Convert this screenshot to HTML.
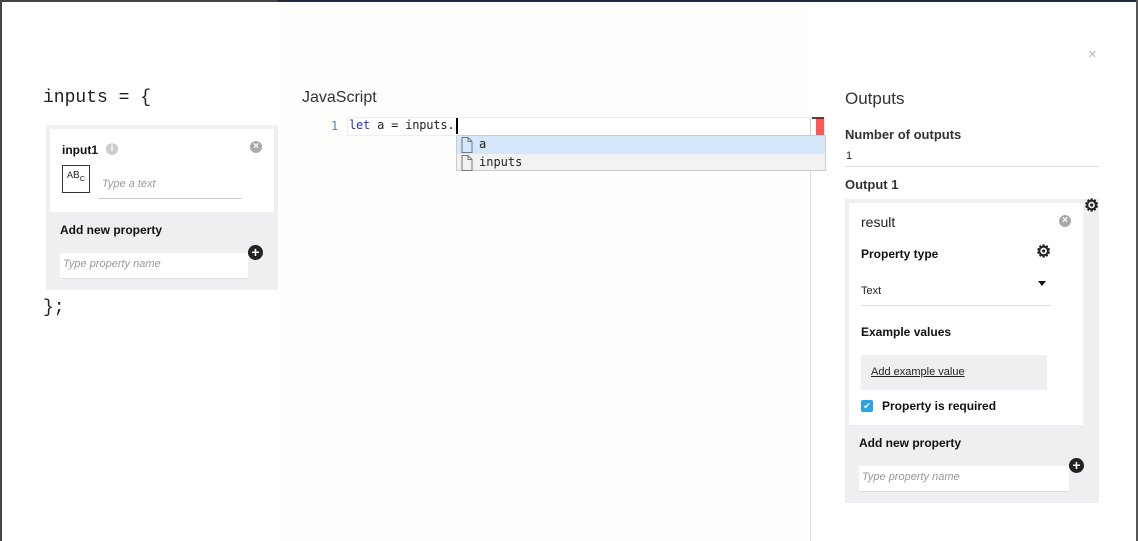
<!DOCTYPE html>
<html><head><style>
*{box-sizing:border-box;margin:0;padding:0}
body{width:1138px;height:541px;background:#fff;position:relative;overflow:hidden;font-family:"Liberation Sans",sans-serif;color:#222}
.a{position:absolute}
.mono{font-family:"Liberation Mono",monospace}
.dj{font-family:"DejaVu Sans Mono",monospace}
.b{font-weight:bold;font-size:12px;color:#111}
.ph{font-style:italic;color:#999;font-size:11px}
.plus{width:15px;height:15px;border-radius:50%;background:#222;color:#fff;font-size:14px;line-height:15px;text-align:center;font-weight:bold}
.x{width:12px;height:12px;border-radius:50%;background:#aaa;color:#fff;font-size:10px;line-height:12px;text-align:center;font-weight:bold}
</style></head><body>
<div class="a" style="left:0;top:0;width:1138px;height:2px;background:#444"></div>
<div class="a" style="left:278px;top:0;width:860px;height:2px;background:#1e2a40"></div>
<div class="a" style="left:0;top:0;width:2px;height:541px;background:#444"></div>
<div class="a" style="left:1136px;top:0;width:2px;height:541px;background:#555"></div>
<div class="a" style="left:280px;top:2px;width:530px;height:539px;background:#fefefd"></div>
<div class="a" style="left:810px;top:118px;width:1px;height:423px;background:#ddd"></div>
<div class="a" style="left:1088px;top:46px;color:#bbb;font-size:15px">×</div>

<div class="a mono" style="left:43px;top:88px;font-size:18px;color:#222">inputs = {</div>
<div class="a" style="left:46px;top:125px;width:232px;height:165px;background:#eeeff1"></div>
<div class="a" style="left:50px;top:129px;width:224px;height:83px;background:#fff"></div>
<div class="a b" style="left:62px;top:143px">input1</div>
<div class="a x" style="left:106px;top:143px;background:#ccc">i</div>
<div class="a x" style="left:250px;top:141px">×</div>
<div class="a" style="left:62px;top:165px;width:28px;height:28px;border:1px solid #333;font-size:9px;padding:4px 0 0 4px">A<span style="font-size:10px">B</span><sub>C</sub></div>
<div class="a ph" style="left:102px;top:178px">Type a text</div>
<div class="a" style="left:98px;top:198px;width:144px;height:1px;background:#ccc"></div>
<div class="a b" style="left:60px;top:223px">Add new property</div>
<div class="a" style="left:60px;top:253px;width:188px;height:26px;background:#fff;border-bottom:1px solid #ddd"></div>
<div class="a ph" style="left:63px;top:258px">Type property name</div>
<div class="a plus" style="left:248px;top:245px">+</div>
<div class="a mono" style="left:43px;top:298px;font-size:18px">};</div>

<div class="a" style="left:302px;top:89px;font-size:16px;color:#333">JavaScript</div>
<div class="a" style="left:347px;top:117px;width:478px;height:19px;border:1px solid #eee;background:#fff"></div>
<div class="a dj" style="left:331px;top:119px;font-size:12px;color:#4a8aa8">1</div>
<div class="a dj" style="left:349px;top:118px;font-size:12px;color:#222;letter-spacing:-0.2px"><span style="color:#2233cc">let</span> a = inputs.</div>
<div class="a" style="left:456px;top:118px;width:2px;height:16px;background:#000"></div>
<div class="a" style="left:810px;top:118px;width:1px;height:18px;background:#ccc"></div>
<div class="a" style="left:816px;top:117px;width:8px;height:19px;background:#f55"></div>
<div class="a" style="left:812px;top:117px;width:12px;height:2px;background:#444"></div>
<div class="a" style="left:456px;top:135px;width:370px;height:36px;border:1px solid #ccc;background:#f2f2f2"></div>
<div class="a" style="left:457px;top:136px;width:368px;height:18px;background:#d5e7fb"></div>
<svg class="a" style="left:461px;top:137px" width="12" height="34"><path d="M1 .5h6l4 4v11H1z M7 .5v4h4 M1 18.5h6l4 4v11H1z M7 18.5v4h4" fill="none" stroke="#777"/></svg>
<div class="a dj" style="left:479px;top:137px;font-size:12px">a</div>
<div class="a dj" style="left:479px;top:155px;font-size:12px">inputs</div>

<div class="a" style="left:845px;top:89px;font-size:17px;color:#333">Outputs</div>
<div class="a b" style="left:845px;top:127px;font-size:13px;font-weight:bold;color:#333">Number of outputs</div>
<div class="a" style="left:846px;top:150px;font-size:11px">1</div>
<div class="a" style="left:845px;top:166px;width:254px;height:1px;background:#ddd"></div>
<div class="a b" style="left:845px;top:177px;font-size:13px;color:#333">Output 1</div>
<div class="a" style="left:845px;top:199px;width:254px;height:304px;background:#eeeff1"></div>
<div class="a" style="left:849px;top:203px;width:234px;height:222px;background:#fff"></div>
<div class="a" style="left:1084px;top:196px;font-size:17px;color:#222;font-weight:bold">⚙</div>
<div class="a" style="left:861px;top:214px;font-size:14px">result</div>
<div class="a x" style="left:1059px;top:215px">×</div>
<div class="a b" style="left:861px;top:247px">Property type</div>
<div class="a" style="left:1036px;top:242px;font-size:17px;color:#222;font-weight:bold">⚙</div>
<div class="a" style="left:861px;top:285px;font-size:11px">Text</div>
<div class="a" style="left:1038px;top:281px;border:4px solid transparent;border-top:5px solid #111"></div>
<div class="a" style="left:861px;top:305px;width:190px;height:1px;background:#ddd"></div>
<div class="a b" style="left:861px;top:325px">Example values</div>
<div class="a" style="left:861px;top:355px;width:186px;height:35px;background:#eeeff1"></div>
<div class="a" style="left:871px;top:366px;font-size:11px;text-decoration:underline">Add example value</div>
<div class="a" style="left:861px;top:400px;width:12px;height:12px;background:#2aa3e6;border-radius:2px;color:#fff;font-size:9px;line-height:12px;text-align:center">✔</div>
<div class="a b" style="left:882px;top:399px">Property is required</div>
<div class="a b" style="left:859px;top:436px">Add new property</div>
<div class="a" style="left:859px;top:466px;width:210px;height:26px;background:#fff;border-bottom:1px solid #ddd"></div>
<div class="a ph" style="left:862px;top:471px">Type property name</div>
<div class="a plus" style="left:1069px;top:458px">+</div>
</body></html>
